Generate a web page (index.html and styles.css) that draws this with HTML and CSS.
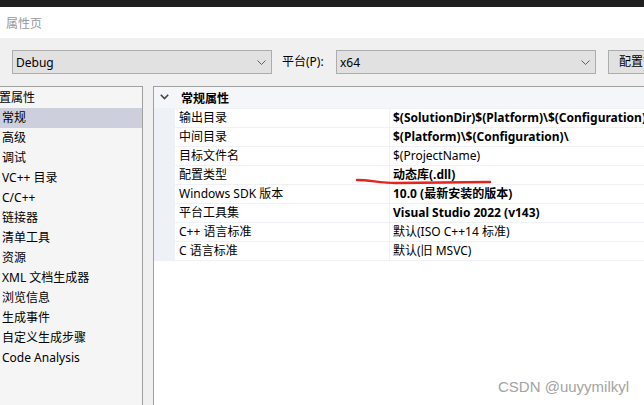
FILE: index.html
```html
<!DOCTYPE html>
<html>
<head>
    <title>属性页</title>
    <meta charset="utf-8">
    <link rel="stylesheet" href="styles.css">
</head>
<body>
    <div class="topbar"></div>
    <div class="titlebar">属性页</div>

    <div class="toolbar">
        <div class="combo combo-config">
            <span>Debug</span>
            <svg class="arrow" width="9" height="6" viewBox="0 0 9 6"><polyline points="0.5,0.5 4.5,4.5 8.5,0.5" fill="none" stroke="#606060" stroke-width="1"/></svg>
        </div>
        <div class="label">平台(P):</div>
        <div class="combo combo-platform">
            <span>x64</span>
            <svg class="arrow" width="9" height="6" viewBox="0 0 9 6"><polyline points="0.5,0.5 4.5,4.5 8.5,0.5" fill="none" stroke="#606060" stroke-width="1"/></svg>
        </div>
        <div class="btn">配置管理器(O)...</div>
    </div>

    <div class="main">
        <div class="tree">
            <div class="item root">配置属性</div>
            <div class="item selected">常规</div>
            <div class="item">高级</div>
            <div class="item">调试</div>
            <div class="item">VC++ 目录</div>
            <div class="item">C/C++</div>
            <div class="item">链接器</div>
            <div class="item">清单工具</div>
            <div class="item">资源</div>
            <div class="item">XML 文档生成器</div>
            <div class="item">浏览信息</div>
            <div class="item">生成事件</div>
            <div class="item">自定义生成步骤</div>
            <div class="item">Code Analysis</div>
        </div>

        <div class="props">
            <div class="grid">
                <div class="group">
                    <svg class="chev" width="9" height="6" viewBox="0 0 9 6"><polyline points="0.8,0.8 4.5,4.5 8.2,0.8" fill="none" stroke="#444" stroke-width="1.6"/></svg>
                    <span>常规属性</span>
                </div>
                <div class="row"><div class="name">输出目录</div><div class="val b">$(SolutionDir)$(Platform)\$(Configuration)\</div></div>
                <div class="row"><div class="name">中间目录</div><div class="val b">$(Platform)\$(Configuration)\</div></div>
                <div class="row"><div class="name">目标文件名</div><div class="val">$(ProjectName)</div></div>
                <div class="row"><div class="name">配置类型</div><div class="val b">动态库(.dll)</div></div>
                <div class="row"><div class="name">Windows SDK 版本</div><div class="val b">10.0 (最新安装的版本)</div></div>
                <div class="row"><div class="name">平台工具集</div><div class="val b">Visual Studio 2022 (v143)</div></div>
                <div class="row"><div class="name">C++ 语言标准</div><div class="val">默认(ISO C++14 标准)</div></div>
                <div class="row"><div class="name">C 语言标准</div><div class="val">默认(旧 MSVC)</div></div>
            </div>
        </div>
    </div>

    <!-- 手画的红线 -->
    <svg class="mark" width="644" height="405" viewBox="0 0 644 405">
        <path d="M357 180 C370 180 380 183 396 183 L490 182" fill="none" stroke="#e3241c" stroke-width="2.4" stroke-linecap="round"/>
    </svg>

    <div class="watermark">CSDN @uuyymilkyl</div>
</body>
</html>
```

FILE: styles.css
```css
* {
    box-sizing: border-box;
}
body {
    margin: 0;
    width: 644px;
    height: 405px;
    overflow: hidden;
    position: relative;
    background: #f0f0f0;
    font-family: "Noto Sans", "Noto Sans CJK SC", sans-serif;
    font-size: 12px;
    color: #000;
}

.topbar {
    height: 7px;
    background: #1f1f1f;
}
.titlebar {
    height: 31px;
    line-height: 31px;
    background: #fff;
    color: #999;
    padding: 1px 0 0 6px;
}

.toolbar {
    height: 48px;
    display: flex;
    align-items: flex-start;
    padding: 12px 0 0 12px;
    white-space: nowrap;
}
.combo {
    flex: none;
    height: 24px;
    width: 260px;
    background: #e1e1e1;
    border: 1px solid #adadad;
    display: flex;
    align-items: center;
    justify-content: space-between;
    padding: 0 5px 0 3px;
}
.combo .arrow {
    margin-top: 1px;
}
.label {
    flex: none;
    line-height: 24px;
    width: 64px;
    padding-left: 10px;
}
.btn {
    flex: none;
    margin-left: 12px;
    height: 24px;
    line-height: 22px;
    background: #e1e1e1;
    border: 1px solid #adadad;
    padding: 0 10px;
}

.main {
    display: flex;
    height: 319px;
}
.tree {
    width: 143px;
    flex: none;
    background: #f5f5f5;
    border-top: 1px solid #a0a0a0;
    border-right: 1px solid #a0a0a0;
    padding-top: 1px;
    overflow: hidden;
}
.item {
    height: 20px;
    line-height: 20px;
    padding-left: 2px;
    white-space: nowrap;
}
.item.root {
    margin-left: -15px;
}
.item.selected {
    background: #cdd0dc;
}

.props {
    flex: 1;
    margin-left: 10px;
    background: #fff;
    border-top: 1px solid #a0a0a0;
    border-left: 1px solid #a0a0a0;
    overflow: hidden;
}
.grid {
    background: #eef1f5;
    padding-bottom: 1px;
}
.group {
    height: 21px;
    background: #f4f6f9;
    display: flex;
    align-items: center;
    font-weight: 700;
    white-space: nowrap;
}
.group .chev {
    margin: 0 12px 2px 6px;
}
.row {
    display: grid;
    grid-template-columns: 214px 1fr;
    column-gap: 1px;
    margin: 1px 0 0 21px;
    height: 18px;
    line-height: 18px;
    white-space: nowrap;
}
.row .name {
    background: #fff;
    padding-left: 4px;
}
.row .val {
    background: #fff;
    padding-left: 3px;
    overflow: hidden;
}
.row .b {
    font-weight: 700;
}

.mark {
    position: absolute;
    left: 0;
    top: 0;
    pointer-events: none;
}
.watermark {
    position: absolute;
    left: 498px;
    top: 379px;
    font-family: "Liberation Sans", Arial, sans-serif;
    font-size: 15px;
    line-height: 16px;
    color: #a3a3a3;
    white-space: nowrap;
}
```
